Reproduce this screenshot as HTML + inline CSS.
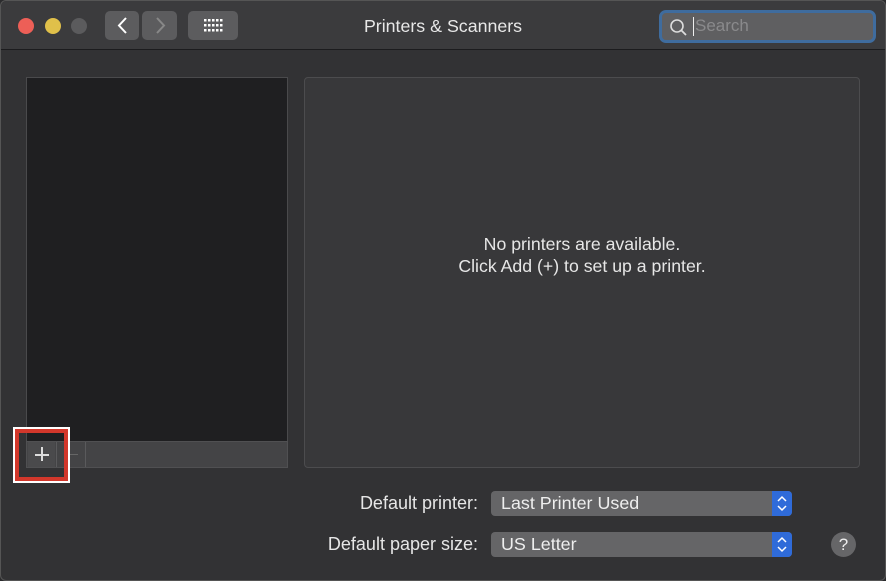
<!DOCTYPE html>
<html><head><style>
*{margin:0;padding:0;box-sizing:border-box}
body{width:886px;height:581px;background:#2b2b2d;font-family:"Liberation Sans",sans-serif;overflow:hidden;position:relative}
.win{position:absolute;left:0;top:0;width:886px;height:581px;background:#323234;border-radius:6px;box-shadow:inset 0 0 0 1px #555}
.tb{position:absolute;left:1px;top:1px;width:884px;height:49px;background:#3b3b3d;border-bottom:1px solid #1c1c1e;border-radius:6px 6px 0 0}
.dot{position:absolute;top:17px;width:16px;height:16px;border-radius:50%}
.btn{position:absolute;top:10px;height:29px;background:#5c5c5e;border-radius:5px}
.abs{position:absolute}
</style></head><body>
<div class="win">
<div class="tb">
<div class="dot" style="left:17px;background:#ed5f57"></div>
<div class="dot" style="left:44px;background:#e0c04a"></div>
<div class="dot" style="left:70px;background:#5b5b5d"></div>
<div class="btn" style="left:104px;width:34px"><svg width="34" height="29"><path d="M21 7 L14 14.5 L21 22" stroke="#fff" stroke-width="2" fill="none"/></svg></div>
<div class="btn" style="left:141px;width:35px"><svg width="35" height="29"><path d="M15 7 L22 14.5 L15 22" stroke="#888" stroke-width="2" fill="none"/></svg></div>
<div class="btn" style="left:187px;width:50px"><svg width="50" height="29" fill="#fff"><g>
<rect x="16" y="8" width="2.5" height="2.5"/><rect x="20" y="8" width="2.5" height="2.5"/><rect x="24" y="8" width="2.5" height="2.5"/><rect x="28" y="8" width="2.5" height="2.5"/><rect x="32" y="8" width="2.5" height="2.5"/>
<rect x="16" y="13" width="2.5" height="2.5"/><rect x="20" y="13" width="2.5" height="2.5"/><rect x="24" y="13" width="2.5" height="2.5"/><rect x="28" y="13" width="2.5" height="2.5"/><rect x="32" y="13" width="2.5" height="2.5"/>
<rect x="16" y="18" width="2.5" height="2.5"/><rect x="20" y="18" width="2.5" height="2.5"/><rect x="24" y="18" width="2.5" height="2.5"/><rect x="28" y="18" width="2.5" height="2.5"/><rect x="32" y="18" width="2.5" height="2.5"/></g></svg></div>
<div class="abs" style="left:0;width:884px;top:15px;text-align:center;color:#e8e8e8;font-size:17.8px">Printers &amp; Scanners</div>
<div class="abs" style="left:658px;top:9px;width:217px;height:33px;border:3px solid #3f6c9e;border-radius:7px;background:#5f5f61">
<svg class="abs" style="left:7px;top:5px" width="20" height="20"><circle cx="8" cy="8" r="6" stroke="#ddd" stroke-width="1.6" fill="none"/><path d="M12.5 12.5 L17 17" stroke="#ddd" stroke-width="1.8"/></svg>
<div class="abs" style="left:31px;top:4px;width:1px;height:19px;background:#eee"></div>
<div class="abs" style="left:33px;top:3px;color:#8a8a8c;font-size:17px">Search</div>
</div>
</div>
<div class="abs" style="left:26px;top:77px;width:262px;height:365px;background:#1f1f21;border:1px solid #4a4a4c"></div>
<div class="abs" style="left:26px;top:441px;width:262px;height:27px;background:#444446;border:1px solid #505052"></div>
<div class="abs" style="left:56px;top:442px;width:1px;height:25px;background:#5a5a5c"></div>
<div class="abs" style="left:85px;top:442px;width:1px;height:25px;background:#5a5a5c"></div>
<div class="abs" style="left:64px;top:454px;width:14px;height:1px;background:#666"></div>
<div class="abs" style="left:13px;top:427px;width:57px;height:56px;border:2px solid #fff">
<div style="width:53px;height:52px;border:4px solid #d2372b"></div></div>
<div class="abs" style="left:28px;top:442px;width:27px;height:25px;background:#4a4a4c"></div>
<div class="abs" style="left:35px;top:454px;width:14px;height:1.5px;background:#ddd"></div>
<div class="abs" style="left:41px;top:447px;width:1.5px;height:14px;background:#ddd"></div>
<div class="abs" style="left:304px;top:77px;width:556px;height:391px;background:#38383a;border:1px solid #4c4c4e;border-radius:4px"></div>
<div class="abs" style="left:304px;top:233px;width:556px;text-align:center;color:#e6e6e6;font-size:17.7px;line-height:22px">No printers are available.<br>Click Add (+) to set up a printer.</div>
<div class="abs" style="left:280px;top:493px;width:198px;text-align:right;color:#e6e6e6;font-size:18px">Default printer:</div>
<div class="abs" style="left:280px;top:534px;width:198px;text-align:right;color:#e6e6e6;font-size:18px">Default paper size:</div>
<div class="abs" style="left:491px;top:491px;width:301px;height:25px;background:#656567;border-radius:4px;color:#eee;font-size:17.9px;padding:2px 10px">Last Printer Used</div>
<div class="abs" style="left:491px;top:532px;width:301px;height:25px;background:#656567;border-radius:4px;color:#eee;font-size:17.9px;padding:2px 10px">US Letter</div>
<div class="abs" style="left:772px;top:491px;width:20px;height:25px;background:#2f6bd9;border-radius:0 4px 4px 0"><svg width="20" height="25"><path d="M6 10 L10 6 L14 10 M6 15 L10 19 L14 15" stroke="#fff" stroke-width="1.5" fill="none"/></svg></div>
<div class="abs" style="left:772px;top:532px;width:20px;height:25px;background:#2f6bd9;border-radius:0 4px 4px 0"><svg width="20" height="25"><path d="M6 10 L10 6 L14 10 M6 15 L10 19 L14 15" stroke="#fff" stroke-width="1.5" fill="none"/></svg></div>
<div class="abs" style="left:831px;top:532px;width:25px;height:25px;border-radius:50%;background:#666668;color:#eee;font-size:17px;text-align:center;line-height:25px">?</div>
</div>
</body></html>
